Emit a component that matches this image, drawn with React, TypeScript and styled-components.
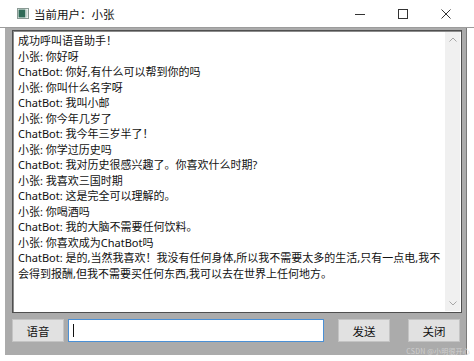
import styled, { createGlobalStyle } from 'styled-components'

const GlobalStyle = createGlobalStyle`
  html, body {
    margin: 0;
    padding: 0;
    background: #ffffff;
  }
  body {
    font-family: "Noto Sans", "Noto Sans CJK SC", sans-serif;
  }
`

const Window = styled.div`
  position: relative;
  width: 474px;
  height: 361px;
  display: flex;
  flex-direction: column;
  background: #ffffff;
  overflow: hidden;
`

const TitleBar = styled.div`
  height: 27px;
  display: flex;
  align-items: center;
  background: #ffffff;
  border-bottom: 1px solid #9c9c9c;
`

const TitleIcon = styled.svg`
  margin-left: 17px;
  width: 12px;
  height: 11px;
`

const TitleText = styled.span`
  margin-left: 5px;
  font-family: "Noto Sans CJK SC", sans-serif;
  font-size: 11.5px;
  color: #111111;
  flex: 1;
`

const Controls = styled.div`
  display: flex;
  margin-right: 7px;
`

const ControlButton = styled.div`
  width: 43px;
  height: 27px;
  display: flex;
  align-items: center;
  justify-content: center;
`

const Client = styled.div`
  flex: 1;
  margin: 0 7px 6px 5px;
  background: #ababab;
  border-right: 1px solid #7a7a7a;
  padding: 2px 4px 13px 7px;
  display: flex;
  flex-direction: column;
  gap: 6px;
`

const ChatBox = styled.div`
  flex: 1;
  display: flex;
  background: #ffffff;
  border: 1px solid #4f4f4f;
  box-shadow: inset 1px 1px 0 #8c8c8c;
  min-height: 0;
`

const Messages = styled.div`
  flex: 1;
  padding: 2px 0 0 5px;
  font-family: "Noto Sans", "Noto Sans CJK SC", sans-serif;
  font-size: 11px;
  line-height: 15.5px;
  color: #111111;
  word-break: break-all;
`

const Line = styled.div``

const Scrollbar = styled.div`
  width: 15px;
  margin: 1px 1px 1px 0;
  background: #f0f0f0;
  display: flex;
  flex-direction: column;
  justify-content: space-between;
  align-items: center;
  padding: 5px 0;
`

const BottomRow = styled.div`
  display: flex;
  align-items: center;
  height: 23px;
`

const Button = styled.div<{ $gap?: number }>`
  width: 52px;
  height: 23px;
  box-sizing: border-box;
  margin-left: ${p => p.$gap ?? 0}px;
  background: #e1e1e1;
  border: 1px solid #c4c4c4;
  display: flex;
  align-items: center;
  justify-content: center;
  font-family: "Noto Sans CJK SC", sans-serif;
  font-size: 11.5px;
  color: #111111;
`

const InputBox = styled.div`
  width: 256px;
  height: 23px;
  box-sizing: border-box;
  margin-left: 4px;
  background: #ffffff;
  border: 1px solid #4a90d6;
  display: flex;
  align-items: center;
  padding-left: 4px;
`

const Caret = styled.span`
  width: 1px;
  height: 13px;
  background: #111111;
`

const Watermark = styled.div`
  position: absolute;
  right: 4px;
  bottom: 5px;
  font-family: "Noto Sans CJK SC", sans-serif;
  font-size: 7px;
  color: #cfcfcf;
  letter-spacing: 0.2px;
`

const messages = [
  '成功呼叫语音助手！',
  '小张: 你好呀',
  'ChatBot: 你好,有什么可以帮到你的吗',
  '小张: 你叫什么名字呀',
  'ChatBot: 我叫小邮',
  '小张: 你今年几岁了',
  'ChatBot: 我今年三岁半了！',
  '小张: 你学过历史吗',
  'ChatBot: 我对历史很感兴趣了。你喜欢什么时期?',
  '小张: 我喜欢三国时期',
  'ChatBot: 这是完全可以理解的。',
  '小张: 你喝酒吗',
  'ChatBot: 我的大脑不需要任何饮料。',
  '小张: 你喜欢成为ChatBot吗',
  'ChatBot: 是的,当然我喜欢！我没有任何身体,所以我不需要太多的生活,只有一点电,我不会得到报酬,但我不需要买任何东西,我可以去在世界上任何地方。',
]

export default function App() {
  return (
    <>
      <GlobalStyle />
      <Window>
        <TitleBar>
          <TitleIcon viewBox="0 0 12 11">
            <rect x="0.5" y="0.5" width="11" height="10" fill="#ffffff" stroke="#8a9a94" />
            <rect x="1.5" y="1.5" width="7" height="8" fill="#2f6a57" />
            <rect x="8.5" y="1.5" width="2" height="8" fill="#c9d6d1" />
          </TitleIcon>
          <TitleText>当前用户：小张</TitleText>
          <Controls>
            <ControlButton>
              <svg width="10" height="10" viewBox="0 0 10 10">
                <line x1="0" y1="5.5" x2="10" y2="5.5" stroke="#333" strokeWidth="1" />
              </svg>
            </ControlButton>
            <ControlButton>
              <svg width="10" height="10" viewBox="0 0 10 10">
                <rect x="0.5" y="0.5" width="9" height="9" fill="none" stroke="#333" strokeWidth="1" />
              </svg>
            </ControlButton>
            <ControlButton>
              <svg width="10" height="10" viewBox="0 0 10 10">
                <path d="M0.5 0.5 L9.5 9.5 M9.5 0.5 L0.5 9.5" stroke="#333" strokeWidth="1" />
              </svg>
            </ControlButton>
          </Controls>
        </TitleBar>
        <Client>
          <ChatBox>
            <Messages>
              {messages.map((m, i) => (
                <Line key={i}>{m}</Line>
              ))}
            </Messages>
            <Scrollbar>
              <svg width="8" height="5" viewBox="0 0 8 5">
                <path d="M0.5 4.5 L4 1 L7.5 4.5" fill="none" stroke="#a6a6a6" strokeWidth="1" />
              </svg>
              <svg width="8" height="5" viewBox="0 0 8 5">
                <path d="M0.5 0.5 L4 4 L7.5 0.5" fill="none" stroke="#a6a6a6" strokeWidth="1" />
              </svg>
            </Scrollbar>
          </ChatBox>
          <BottomRow>
            <Button>语音</Button>
            <InputBox>
              <Caret />
            </InputBox>
            <Button $gap={14}>发送</Button>
            <Button $gap={18}>关闭</Button>
          </BottomRow>
        </Client>
        <Watermark>CSDN @小明很开心</Watermark>
      </Window>
    </>
  )
}
